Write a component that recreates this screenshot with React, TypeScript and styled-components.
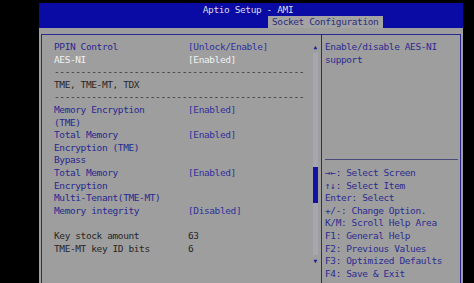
import React from 'react';
import styled, {createGlobalStyle} from 'styled-components';

const GlobalStyle = createGlobalStyle`
  html, body {
    margin: 0;
    padding: 0;
    background: #000;
    overflow: hidden;
  }
  body {
    font-family: "DejaVu Sans Mono", "Liberation Mono", monospace;
    font-size: 9.5px;
    letter-spacing: -0.4px;
  }
`

const Screen = styled.div`
  width: 424px;
  height: 280px;
  margin: 3px 0 0 39px;
  display: flex;
  flex-direction: column;
`

const Header = styled.header`
  background: #0a0aa4;
  height: 25px;
  display: flex;
  flex-direction: column;
`

const Title = styled.div`
  height: 13px;
  line-height: 13px;
  text-align: center;
  padding-right: 6px;
  color: #dcdce4;
`

const TabRow = styled.div`
  height: 12px;
  display: flex;
  padding-left: 229px;
`

const Tab = styled.div`
  width: 111px;
  padding-left: 4px;
  background: #a3a3a3;
  color: #2c2c7c;
  line-height: 12px;
`

const Body = styled.main`
  flex: 1;
  background: #9e9e9e;
  padding: 6px 2px 0 2px;
  display: flex;
`

const Frame = styled.div`
  flex: 1;
  border: 1px solid #28288e;
  border-bottom: none;
  display: grid;
  grid-template-columns: 280px 1fr;
`

const LeftPane = styled.section`
  display: flex;
  border-right: 1px solid #28288e;
`

const Items = styled.div`
  flex: 1;
  padding: 6px 0 0 12px;
`

const Row = styled.div`
  display: flex;
  line-height: 12.6px;
  height: 12.6px;
`

const Label = styled.span<{tone: string}>`
  width: 134px;
  color: ${p => p.tone};
  white-space: pre;
`

const Value = styled.span<{tone: string}>`
  color: ${p => p.tone};
  white-space: pre;
`

const Dashes = styled.div`
  line-height: 12.6px;
  height: 12.6px;
  color: #2e2e2e;
  white-space: pre;
  overflow: hidden;
  width: 250px;
`

const ScrollBar = styled.div`
  width: 6px;
  margin-right: 3px;
  padding-top: 6px;
  display: flex;
  flex-direction: column;
  align-items: center;
`

const Arrow = styled.div`
  color: #1a1a9a;
  font-size: 6px;
  line-height: 12px;
  height: 12px;
`

const Track = styled.div`
  width: 5px;
  height: 202px;
  background: #a6a6b0;
  padding-top: 114px;
  box-sizing: border-box;
`

const Thumb = styled.div`
  height: 36px;
  background: #1212a2;
`

const RightPane = styled.section`
  display: flex;
  flex-direction: column;
  padding: 6px 2px 0 3px;
`

const HelpText = styled.div`
  height: 118px;
  color: #2c2c90;
  line-height: 12.6px;
`

const Separator = styled.div`
  height: 1px;
  background: #4a4a7a;
  margin-bottom: 7px;
`

const KeyLine = styled.div`
  color: #2c2c90;
  line-height: 12.6px;
  height: 12.6px;
  white-space: pre;
`

const LABEL = '#28288e'
const VALUE = '#30309c'
const ACTIVE = '#f2f2f2'
const PLAIN = '#262626'

type Item =
  | {kind: 'row'; label: string; value?: string; tone?: string; valueTone?: string}
  | {kind: 'dash'}
  | {kind: 'blank'}

const items: Item[] = [
  {kind: 'row', label: 'PPIN Control', value: '[Unlock/Enable]'},
  {kind: 'row', label: 'AES-NI', value: '[Enabled]', tone: ACTIVE, valueTone: ACTIVE},
  {kind: 'dash'},
  {kind: 'row', label: 'TME, TME-MT, TDX', tone: PLAIN},
  {kind: 'dash'},
  {kind: 'row', label: 'Memory Encryption', value: '[Enabled]'},
  {kind: 'row', label: '(TME)'},
  {kind: 'row', label: 'Total Memory', value: '[Enabled]'},
  {kind: 'row', label: 'Encryption (TME)'},
  {kind: 'row', label: 'Bypass'},
  {kind: 'row', label: 'Total Memory', value: '[Enabled]'},
  {kind: 'row', label: 'Encryption'},
  {kind: 'row', label: 'Multi-Tenant(TME-MT)'},
  {kind: 'row', label: 'Memory integrity', value: '[Disabled]'},
  {kind: 'blank'},
  {kind: 'row', label: 'Key stock amount', value: '63', tone: PLAIN, valueTone: PLAIN},
  {kind: 'row', label: 'TME-MT key ID bits', value: '6', tone: PLAIN, valueTone: PLAIN},
]

const keys = [
  '→←: Select Screen',
  '↑↓: Select Item',
  'Enter: Select',
  '+/-: Change Option.',
  'K/M: Scroll Help Area',
  'F1: General Help',
  'F2: Previous Values',
  'F3: Optimized Defaults',
  'F4: Save & Exit',
]

export default function App() {
  return (
    <>
      <GlobalStyle/>
      <Screen>
        <Header>
          <Title>Aptio Setup - AMI</Title>
          <TabRow>
            <Tab>Socket Configuration</Tab>
          </TabRow>
        </Header>
        <Body>
          <Frame>
            <LeftPane>
              <Items>
                {items.map((it, i) => {
                  if (it.kind === 'dash') return <Dashes key={i}>{'-'.repeat(47)}</Dashes>
                  if (it.kind === 'blank') return <Row key={i}/>
                  return (
                    <Row key={i}>
                      <Label tone={it.tone || LABEL}>{it.label}</Label>
                      {it.value && <Value tone={it.valueTone || VALUE}>{it.value}</Value>}
                    </Row>
                  )
                })}
              </Items>
              <ScrollBar>
                <Arrow>▲</Arrow>
                <Track><Thumb/></Track>
                <Arrow>▼</Arrow>
              </ScrollBar>
            </LeftPane>
            <RightPane>
              <HelpText>Enable/disable AES-NI<br/>support</HelpText>
              <Separator/>
              {keys.map(k => <KeyLine key={k}>{k}</KeyLine>)}
            </RightPane>
          </Frame>
        </Body>
      </Screen>
    </>
  );
}
